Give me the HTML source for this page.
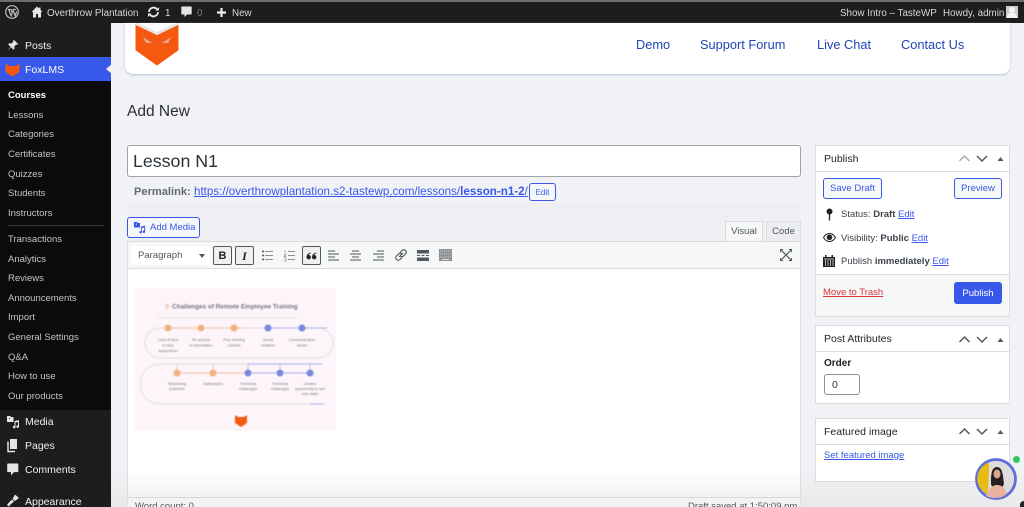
<!DOCTYPE html>
<html><head><meta charset="utf-8">
<style>
html,body{margin:0;padding:0;width:1024px;height:507px;overflow:hidden;background:#f0f0f1}
body{position:relative;font-family:"Liberation Sans",sans-serif;font-size:9.5px;color:#3c434a}
.t{position:absolute;white-space:nowrap;line-height:12px;margin-top:1px}
.b{position:absolute;box-sizing:border-box}
.s{color:#c3c4c7;font-size:9.5px;left:8px}
.m{color:#f0f0f1;font-size:10.5px;left:25px}
a{color:#3858e9;text-decoration:underline}
.nav{color:#2145b5;font-size:12.8px;top:38px;line-height:14px;margin-top:0}
.btn{position:absolute;box-sizing:border-box;border:1px solid #3858e9;border-radius:3px;background:#f6f7f7;color:#3858e9;text-align:center;font-size:9.5px}
.box{position:absolute;box-sizing:border-box;left:815px;width:195px;background:#fff;border:1px solid #dcdcde}
.hd{position:absolute;left:0;right:0;top:0;height:25px;border-bottom:1px solid #dcdcde}
svg{position:absolute;overflow:visible}
</style></head><body>

<!-- admin bar -->
<div class="b" style="left:0;top:0;width:1024px;height:23px;background:#1d1d1d;border-top:2px solid #6d6e70"></div>
<svg style="left:5px;top:5px" width="14" height="14" viewBox="0 0 14 14"><circle cx="7" cy="7" r="6.3" fill="none" stroke="#bcc0c4" stroke-width="1.2"/><path d="M3 4.5h3.2M7.6 4.5h3.2M3.8 4.6l2.4 6.2 1.1-3.4-1-2.8M7.8 4.6l2.4 6.2 1.5-4.4" fill="none" stroke="#bcc0c4" stroke-width="1.2"/></svg>
<svg style="left:31px;top:6px" width="12" height="12" viewBox="0 0 12 12"><path d="M6 .5L.5 6H2v5.5h3V8h2v3.5h3V6h1.5L9.500 4V1.500H8V2.500z" fill="#e4e5e6"/></svg>
<div class="t" style="left:47px;top:7px;color:#d5d6d8;font-size:9.800px">Overthrow Plantation</div>
<svg style="left:147px;top:6px" width="13" height="12" viewBox="0 0 13 12"><path d="M2 6a4.500 4.500 0 0 1 8-2.700M11 6a4.500 4.500 0 0 1-8 2.700" fill="none" stroke="#e8e8e8" stroke-width="1.800"/><path d="M8.500 4.500h3.500V1zM4.500 7.500H1V11z" fill="#e8e8e8"/></svg>
<div class="t" style="left:165px;top:7px;color:#d5d6d8;font-size:9.800px">1</div>
<svg style="left:181px;top:6px" width="11" height="12" viewBox="0 0 11 12"><path d="M1 .5h9a.7.700 0 0 1 .7.700v6.600a.7.700 0 0 1-.7.700H6L3.500 11V8.500H1a.7.700 0 0 1-.7-.7V1.200A.7.700 0 0 1 1 .5z" fill="#e4e5e6"/></svg>
<div class="t" style="left:197px;top:7px;color:#75787b;font-size:9.800px">0</div>
<svg style="left:216px;top:7px" width="11" height="11" viewBox="0 0 11 11"><path d="M5.500 1v9M1 5.500h9" stroke="#eee" stroke-width="2.200"/></svg>
<div class="t" style="left:232px;top:7px;color:#d5d6d8;font-size:9.800px">New</div>
<div class="t" style="left:840px;top:7px;color:#d5d6d8;font-size:9.800px">Show Intro – TasteWP</div>
<div class="t" style="left:943px;top:7px;color:#d5d6d8;font-size:9.800px">Howdy, admin</div>
<div class="b" style="left:1006px;top:6px;width:12px;height:12px;background:#c9cacc"><div class="b" style="left:3px;top:1px;width:6px;height:6px;border-radius:50%;background:#f3f3f3"></div><div class="b" style="left:1px;top:7px;width:10px;height:5px;border-radius:4px 4px 0 0;background:#f3f3f3"></div></div>

<!-- sidebar -->
<div class="b" style="left:0;top:23px;width:111px;height:484px;background:#1d1d1d"></div>
<div class="b" style="left:0;top:81px;width:111px;height:329px;background:#0b0b0b"></div>
<div class="b" style="left:0;top:57px;width:111px;height:24px;background:#3858e9"></div>
<div class="b" style="left:106px;top:64px;border:5px solid transparent;border-right:6px solid #f0f0f1;border-left:0"></div>
<svg style="left:6px;top:39px" width="13" height="13" viewBox="0 0 13 13"><path d="M7.800.7l4.500 4.500-1.300.6-.7-.3-2 2 .2 2.300-1 1L5 8.300 1 12 4.600 7.800 2.100 5.300l1-1 2.300.2 2-2-.2-.7z" fill="#e4e5e6"/></svg>
<div class="t m" style="top:39px">Posts</div>
<svg style="left:5px;top:63px" width="15" height="14" viewBox="0 0 15 14"><path d="M.5.500L4 3h7l3.500-2.500V9L7.500 13.500.5 9z" fill="#f4590f"/></svg>
<div class="t" style="left:25px;top:63px;color:#fff;font-size:10.500px">FoxLMS</div>
<div class="t s" style="top:89px;color:#fff;font-weight:bold">Courses</div>
<div class="t s" style="top:109px">Lessons</div>
<div class="t s" style="top:128px">Categories</div>
<div class="t s" style="top:148px">Certificates</div>
<div class="t s" style="top:168px">Quizzes</div>
<div class="t s" style="top:187px">Students</div>
<div class="t s" style="top:207px">Instructors</div>
<div class="b" style="left:8px;top:225px;width:96px;height:1px;background:#3a3a3a"></div>
<div class="t s" style="top:233px">Transactions</div>
<div class="t s" style="top:253px">Analytics</div>
<div class="t s" style="top:272px">Reviews</div>
<div class="t s" style="top:292px">Announcements</div>
<div class="t s" style="top:311px">Import</div>
<div class="t s" style="top:331px">General Settings</div>
<div class="t s" style="top:351px">Q&amp;A</div>
<div class="t s" style="top:370px">How to use</div>
<div class="t s" style="top:390px">Our products</div>
<svg style="left:6px;top:415px" width="14" height="14" viewBox="0 0 14 14"><path d="M1 1h3l1 1h2.500v5H1zM3 3v1h1V3z" fill="#e4e5e6" fill-rule="evenodd"/><path d="M8.500 6L13 5v6.500a1.300 1.300 0 1 1-1-1.200V7L9.500 7.600v4.400a1.300 1.300 0 1 1-1-1.200z" fill="#e4e5e6"/></svg>
<div class="t m" style="top:415px">Media</div>
<svg style="left:7px;top:439px" width="12" height="13" viewBox="0 0 12 13"><path d="M3 0h7v10H3z" fill="#e4e5e6"/><path d="M1 2.500v10h7" fill="none" stroke="#e4e5e6" stroke-width="1.500"/></svg>
<div class="t m" style="top:439px">Pages</div>
<svg style="left:7px;top:463px" width="12" height="13" viewBox="0 0 12 13"><path d="M1 .5h9.500a.8.800 0 0 1 .8.800v7a.8.800 0 0 1-.8.800H7L4 12.500V9.100H1a.8.800 0 0 1-.8-.8v-7A.8.800 0 0 1 1 .5z" fill="#e4e5e6"/></svg>
<div class="t m" style="top:463px">Comments</div>
<svg style="left:6px;top:494px" width="14" height="13" viewBox="0 0 14 13"><path d="M9 .5l4 3.500-4 3L6.500 5zM6 5.500L8 7.500 4.500 10.500 3 12.500 1 11l1.500-2z" fill="#e4e5e6"/></svg>
<div class="t m" style="top:495px">Appearance</div>

<!-- main bg -->
<div class="b" style="left:111px;top:23px;width:913px;height:484px;background:#f1f2f5"></div>

<!-- header card -->
<div class="b" style="left:125px;top:23px;width:885px;height:51px;background:#fff;border-radius:0 0 8px 8px;box-shadow:0 1px 2px #b7c0de"></div>
<svg style="left:136px;top:23px" width="42" height="43" viewBox="0 0 42 43"><path d="M0 2l20.500 10L42 2v25L21 42 0 27z" fill="#f4590f" stroke="#f4590f" stroke-linejoin="round"/><path d="M0 0h42v2L21 12 0 2z" fill="#fff"/><path d="M2 0l19 9L40 0h2v2L21 12 0 2V0z" fill="#e6e6e6"/><path d="M7 14l9 6-6 0zM35 14l-9 6 6 0z" fill="#f4a78f"/></svg>
<div class="t nav" style="left:636px">Demo</div>
<div class="t nav" style="left:700px">Support Forum</div>
<div class="t nav" style="left:817px">Live Chat</div>
<div class="t nav" style="left:901px">Contact Us</div>

<div class="t" style="left:127px;top:103px;color:#2c3034;font-size:15.500px;line-height:18px;margin-top:0">Add New</div>

<!-- title -->
<div class="b" style="left:127px;top:145px;width:674px;height:32px;background:#fff;border:1px solid #a0a3a8;border-radius:3px"></div>
<div class="t" style="left:133px;top:150px;color:#2c3338;font-size:17.800px;line-height:22px;margin-top:0">Lesson N1</div>

<div class="t" style="left:134px;top:185px;font-size:11.100px;line-height:14px;color:#646970;margin-top:0"><b>Permalink:</b></div>
<div class="t" style="left:194px;top:185px;font-size:11.600px;line-height:14px;margin-top:0"><a>https://overthrowplantation.s2-tastewp.com/lessons/<b>lesson-n1-2</b>/</a></div>
<div class="btn" style="left:529px;top:183px;width:27px;height:18px;font-size:8px;line-height:17px;background:#f6f7f7">Edit</div>

<!-- editor -->
<div class="b" style="left:127px;top:203px;width:674px;height:41px;background:#eeeff2"></div>
<div class="btn" style="left:127px;top:217px;width:73px;height:21px;line-height:20px;text-align:left;padding-left:22px;font-size:9.500px;background:#f6f7fb">Add Media</div>
<svg style="left:133px;top:221px" width="13" height="13" viewBox="0 0 14 14"><path d="M1 1h3l1 1h2.500v5H1zM3 3v1h1V3z" fill="#3858e9" fill-rule="evenodd"/><path d="M8.500 6L13 5v6.500a1.300 1.300 0 1 1-1-1.200V7L9.500 7.600v4.400a1.300 1.300 0 1 1-1-1.200z" fill="#3858e9"/></svg>
<div class="b" style="left:725px;top:221px;width:38px;height:21px;background:#f6f7f7;border:1px solid #dcdcde;border-bottom:0;color:#50575e;text-align:center;line-height:19px;font-size:9.500px">Visual</div>
<div class="b" style="left:766px;top:221px;width:35px;height:20px;background:#ecedf0;border:1px solid #dcdcde;border-bottom:0;color:#50575e;text-align:center;line-height:19px;font-size:9.500px">Code</div>
<div class="b" style="left:127px;top:241px;width:674px;height:266px;background:#fff;border:1px solid #dcdcde;border-top:1px solid #dcdcde"></div>
<div class="b" style="left:128px;top:242px;width:672px;height:27px;background:#f6f7f7;border-bottom:1px solid #dcdcde"></div>

<!-- toolbar -->
<div class="b" style="left:131px;top:246px;width:79px;height:19px;background:#fff"></div>
<div class="t" style="left:138px;top:249px;color:#50575e;font-size:9.500px">Paragraph</div>
<div class="b" style="left:199px;top:254px;border:3px solid transparent;border-top:4px solid #50575e;border-bottom:0"></div>
<div class="b" style="left:213px;top:246px;width:19px;height:19px;border:1px solid #50575e;border-radius:2px;background:#f0f0f1;color:#1d2327;font-weight:bold;font-size:11px;text-align:center;line-height:18px">B</div>
<div class="b" style="left:235px;top:246px;width:19px;height:19px;border:1px solid #50575e;border-radius:2px;background:#f0f0f1;color:#1d2327;font-style:italic;font-weight:bold;font-family:'Liberation Serif',serif;font-size:12px;text-align:center;line-height:18px">I</div>
<svg style="left:262px;top:250px" width="11" height="11" viewBox="0 0 11 11"><path d="M3 1.500h8M3 5.500h8M3 9.500h8" stroke="#8c8f94"/><path d="M0 1.500h2M0 5.500h2M0 9.500h2" stroke="#50575e" stroke-width="1.400"/></svg>
<svg style="left:284px;top:250px" width="11" height="11" viewBox="0 0 11 11"><path d="M4 1.500h7M4 5.500h7M4 9.500h7" stroke="#8c8f94"/><path d="M1 0v3M0 4.500h2l-2 2h2M0 8h2v3H0" fill="none" stroke="#8c8f94" stroke-width=".7"/></svg>
<div class="b" style="left:302px;top:246px;width:19px;height:19px;border:1px solid #50575e;border-radius:2px;background:#f0f0f1"></div>
<svg style="left:306px;top:252px" width="11" height="8" viewBox="0 0 11 8"><path d="M5 .5C2 1 .5 3 .5 5.200A2.200 2.200 0 1 0 2.700 3c.2-.8 1-1.500 2.300-1.800zM10.500.5C7.500 1 6 3 6 5.200A2.200 2.200 0 1 0 8.200 3c.2-.8 1-1.500 2.300-1.800z" fill="#1d2327"/></svg>
<svg style="left:328px;top:250px" width="11" height="11" viewBox="0 0 11 11"><path d="M0 1h7M0 4h11M0 7h7M0 10h11" stroke="#50575e" stroke-width="1.100"/></svg>
<svg style="left:350px;top:250px" width="11" height="11" viewBox="0 0 11 11"><path d="M2 1h7M0 4h11M2 7h7M0 10h11" stroke="#50575e" stroke-width="1.100"/></svg>
<svg style="left:373px;top:250px" width="11" height="11" viewBox="0 0 11 11"><path d="M4 1h7M0 4h11M4 7h7M0 10h11" stroke="#50575e" stroke-width="1.100"/></svg>
<svg style="left:395px;top:249px" width="12" height="12" viewBox="0 0 12 12"><path d="M5 3.500l2-2a2.400 2.400 0 0 1 3.500 3.500l-2 2a2.400 2.400 0 0 1-3 .3M7 8.500l-2 2A2.400 2.400 0 0 1 1.500 7l2-2a2.400 2.400 0 0 1 3-.3M4 8l4-4" fill="none" stroke="#50575e" stroke-width="1.200"/></svg>
<svg style="left:417px;top:250px" width="12" height="11" viewBox="0 0 12 11"><path d="M0 0h12v3.500H0zM0 7.500h12V11H0z" fill="#50575e"/><path d="M0 5.500h3M4.500 5.500h3M9 5.500h3" stroke="#50575e"/></svg>
<svg style="left:439px;top:249px" width="13" height="12" viewBox="0 0 13 12"><path d="M0 0h13v12H0z" fill="#8c8f94"/><path d="M1 2h11M1 5h11M1 8h11" stroke="#ddd" stroke-width=".8" stroke-dasharray="1.200 .8"/><path d="M3 10.500h7" stroke="#ddd"/></svg>
<svg style="left:780px;top:249px" width="12" height="12" viewBox="0 0 12 12"><path d="M0 0h3.500L0 3.500zM12 0H8.500L12 3.500zM0 12h3.500L0 8.500zM12 12H8.500L12 8.500z" fill="#50575e"/><path d="M2 2l8 8M10 2l-8 8" stroke="#50575e" stroke-width="1.200"/></svg>

<!-- infographic -->
<div class="b" style="left:134px;top:288px;width:202px;height:143px;background:#fdf5f9"></div>
<svg style="left:134px;top:288px;filter:blur(.4px)" width="202" height="143" viewBox="0 0 202 143">
<text x="38" y="20.500" font-family="Liberation Sans" font-size="6.400" font-weight="bold" fill="#77777f">Challenges of Remote Employee Training</text>
<text x="31" y="20.500" font-family="Liberation Sans" font-size="6.500" fill="#eaa67a">9</text>
<path d="M24 30H163" stroke="#e6e2e3" stroke-width="1"/>
<path d="M26 40H184a15 15 0 0 1 0 30H26a15 15 0 0 1 0-30z" fill="none" stroke="#dcdfdf" stroke-width="1"/>
<path d="M174 76H26A20 20 0 0 0 26 116H188" fill="none" stroke="#dcdfdf" stroke-width="1"/>
<path d="M114 76H188M176 116H190" stroke="#a8b0ea" stroke-width="1"/>
<path d="M30 40H110" stroke="#eec0a6" stroke-width="1"/><path d="M130 40H193M114 85H180" stroke="#a8b0ea" stroke-width="1"/><path d="M43 85H112" stroke="#eec0a6" stroke-width="1"/>
<path d="M43 76v9M79 76v9" stroke="#eec0a6" stroke-width=".7"/><path d="M114 76v9M146 76v9M176 76v9" stroke="#a8b0ea" stroke-width=".7"/>
<g fill="#f2b27f"><circle cx="34" cy="40" r="3.500"/><circle cx="67" cy="40" r="3.500"/><circle cx="100" cy="40" r="3.500"/><circle cx="43" cy="85" r="3.500"/><circle cx="79" cy="85" r="3.500"/></g>
<g fill="#7a88dc"><circle cx="134" cy="40" r="3.500"/><circle cx="168" cy="40" r="3.500"/><circle cx="114" cy="85" r="3.500"/><circle cx="146" cy="85" r="3.500"/><circle cx="176" cy="85" r="3.500"/></g>
<g font-family="Liberation Sans" font-size="3.800" fill="#77777c" text-anchor="middle">
<text x="34" y="53">Lack of face</text><text x="34" y="58.500">to face</text><text x="34" y="64">supervision</text>
<text x="67" y="53">No access</text><text x="67" y="58.500">to information</text>
<text x="100" y="53">Poor training</text><text x="100" y="58.500">content</text>
<text x="134" y="53">Social</text><text x="134" y="58.500">isolation</text>
<text x="168" y="53">Communication</text><text x="168" y="58.500">issues</text>
<text x="43" y="97">Scheduling</text><text x="43" y="102">problems</text>
<text x="79" y="97">Distractions</text>
<text x="114" y="97">Technical</text><text x="114" y="102">challenges</text>
<text x="146" y="97">Technical</text><text x="146" y="102">challenges</text>
<text x="176" y="97">Limited</text><text x="176" y="102">opportunity to use</text><text x="176" y="107">new skills</text>
</g>
<path d="M101 127l3 2h6l3-2v8l-6 4-6-4z" fill="#f4590f"/>
</svg>

<!-- bottom fade -->
<div class="b" style="left:111px;top:470px;width:913px;height:37px;background:linear-gradient(rgba(238,238,238,0),rgba(225,225,225,.55))"></div>

<!-- word count -->
<div class="b" style="left:128px;top:497px;width:672px;height:10px;background:#f3f3f4;border-top:1px solid #d6d6d8"></div>
<div class="t" style="left:135px;top:500px;color:#50575e;font-size:9.500px">Word count: 0</div>
<div class="t" style="left:688px;top:500px;color:#50575e;font-size:9.500px">Draft saved at 1:50:09 pm.</div>

<!-- publish box -->
<div class="box" style="top:145px;height:172px">
 <div class="hd"><div class="t" style="left:8px;top:6px;font-size:10.500px;color:#1d2327">Publish</div></div>
</div>
<svg style="left:958px;top:154px" width="48" height="9" viewBox="0 0 48 9"><path d="M1.500 7L6.500 2l5 5" fill="none" stroke="#a7aaad" stroke-width="1.500"/><path d="M19 2l5 5 5-5" fill="none" stroke="#50575e" stroke-width="1.500"/><path d="M39.500 7l3-4 3 4z" fill="#50575e"/></svg>
<div class="btn" style="left:823px;top:178px;width:59px;height:21px;line-height:20px">Save Draft</div>
<div class="btn" style="left:954px;top:178px;width:48px;height:21px;line-height:20px">Preview</div>
<svg style="left:825px;top:208px" width="9" height="13" viewBox="0 0 9 13"><circle cx="4.500" cy="3.500" r="3" fill="#1d2327"/><path d="M4.500 6v6.500" stroke="#1d2327" stroke-width="1.300"/></svg>
<div class="t" style="left:841px;top:208px;color:#3c434a;font-size:9.500px">Status: <b>Draft</b> <a>Edit</a></div>
<svg style="left:823px;top:232px" width="13" height="11" viewBox="0 0 13 11"><path d="M.5 5.500C2 3 4 1.500 6.500 1.500S11 3 12.500 5.500C11 8 9 9.500 6.500 9.500S2 8 .5 5.500z" fill="none" stroke="#1d2327"/><circle cx="6.500" cy="5.300" r="2.800" fill="#1d2327"/></svg>
<div class="t" style="left:841px;top:232px;color:#3c434a;font-size:9.500px">Visibility: <b>Public</b> <a>Edit</a></div>
<svg style="left:823px;top:255px" width="12" height="12" viewBox="0 0 12 12"><path d="M0 2h12v10H0z" fill="#1d2327"/><path d="M2 0h1.500v3H2zM8.500 0H10v3H8.500z" fill="#1d2327"/><path d="M1 4h10" stroke="#fff" stroke-width=".7"/><path d="M2.500 5v6M5 5v6M7.500 5v6M10 5v6" stroke="#ddd" stroke-width=".8"/></svg>
<div class="t" style="left:841px;top:255px;color:#3c434a;font-size:9.500px">Publish <b>immediately</b> <a>Edit</a></div>
<div class="b" style="left:816px;top:274px;width:193px;height:42px;background:#f6f7f7;border-top:1px solid #dcdcde"></div>
<div class="t" style="left:823px;top:286px;color:#d63638;font-size:9.500px;text-decoration:underline">Move to Trash</div>
<div class="b" style="left:954px;top:282px;width:48px;height:22px;background:#3858e9;border-radius:3px;color:#fff;text-align:center;line-height:23px;font-size:9.500px">Publish</div>

<!-- post attributes -->
<div class="box" style="top:325px;height:79px">
 <div class="hd"><div class="t" style="left:8px;top:6px;font-size:10.500px;color:#1d2327">Post Attributes</div></div>
 <div class="t" style="left:8px;top:31px;font-size:10px;font-weight:bold;color:#1d2327">Order</div>
 <div class="b" style="left:8px;top:48px;width:36px;height:21px;border:1px solid #8c8f94;border-radius:3px;background:#fff;padding-left:7px;line-height:20px;font-size:10.500px;color:#2c3338">0</div>
</div>
<svg style="left:958px;top:335px" width="48" height="9" viewBox="0 0 48 9"><path d="M1.500 7L6.500 2l5 5" fill="none" stroke="#50575e" stroke-width="1.500"/><path d="M19 2l5 5 5-5" fill="none" stroke="#50575e" stroke-width="1.500"/><path d="M39.500 7l3-4 3 4z" fill="#50575e"/></svg>

<!-- featured -->
<div class="box" style="top:418px;height:64px">
 <div class="hd"><div class="t" style="left:8px;top:6px;font-size:10.500px;color:#1d2327">Featured image</div></div>
 <div class="t" style="left:8px;top:30px;font-size:9.500px"><a>Set featured image</a></div>
</div>
<svg style="left:958px;top:427px" width="48" height="9" viewBox="0 0 48 9"><path d="M1.500 7L6.500 2l5 5" fill="none" stroke="#50575e" stroke-width="1.500"/><path d="M19 2l5 5 5-5" fill="none" stroke="#50575e" stroke-width="1.500"/><path d="M39.500 7l3-4 3 4z" fill="#50575e"/></svg>

<div class="b" style="left:1020px;top:501px;width:4px;height:6px;background:#222;border-radius:4px 0 0 0"></div>

<!-- avatar -->
<svg style="left:975px;top:458px" width="42" height="42" viewBox="0 0 42 42">
<circle cx="21" cy="21" r="19.500" fill="#dedcdc" stroke="#5b6fdc" stroke-width="2.800"/>
<path d="M14 4.500A17 17 0 0 0 12 36C14 30 14 12 14 4.500z" fill="#e8bb12"/>
<path d="M16 26c0-8 0-17 6-17s6 10 7 17l-2 4-9 1z" fill="#26201f"/>
<ellipse cx="22" cy="16" rx="3.500" ry="4.500" fill="#d8a58f"/>
<path d="M11 38c2-7 6-11 11-11s8 3 10 9l-6 3.500-9 .5z" fill="#e9b3a0"/>
</svg>
<div class="b" style="left:1013px;top:456px;width:7px;height:7px;border-radius:50%;background:#35c75a"></div>

</body></html>
